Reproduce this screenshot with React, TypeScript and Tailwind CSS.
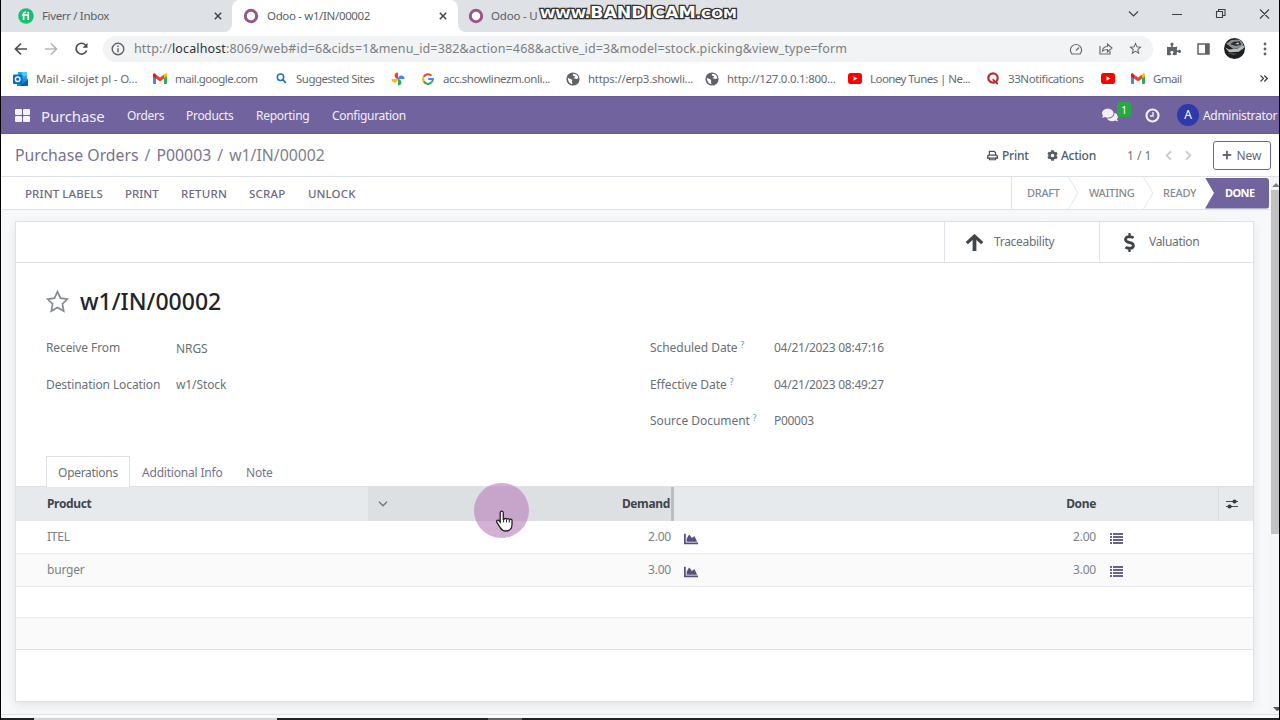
import type React from "react";
import {
  FaChartArea,
  FaChevronLeft,
  FaChevronRight,
  FaCog,
  FaComments,
  FaDollarSign,
  FaPlus,
  FaPuzzlePiece,
} from "react-icons/fa";
import { MdStarBorder } from "react-icons/md";

/* ---------- icons ---------- */

const OdooMark = () => (
  <svg width="16" height="16" viewBox="0 0 16 16" className="shrink-0">
    <circle cx="8" cy="8" r="5.7" fill="#fff" stroke="#96588a" strokeWidth="3" />
  </svg>
);

const FiverrMark = () => (
  <svg width="16" height="16" viewBox="0 0 16 16" className="shrink-0">
    <circle cx="8" cy="8" r="7.8" fill="#1dbf73" />
    <path
      d="M4 7h6.2v5M5.6 12V6.2C5.6 4.8 6.4 4.2 8 4.3"
      fill="none"
      stroke="#fff"
      strokeWidth="1.6"
    />
    <circle cx="10.2" cy="4.8" r="1" fill="#fff" />
  </svg>
);

const CloseMark = () => (
  <svg width="8" height="8" viewBox="0 0 8 8" className="shrink-0">
    <path d="M.8.8l6.4 6.4M7.2.8L.8 7.2" stroke="#3c4043" strokeWidth="1.4" />
  </svg>
);

const Outlook = () => (
  <svg width="16" height="16" viewBox="0 0 16 16" className="shrink-0">
    <path d="M5 1h9v7H5z" fill="#28a8ea" />
    <path d="M9 1h5v4H9z" fill="#50c9f5" />
    <path d="M4 7l11 1v7H4z" fill="#1490df" />
    <path d="M6 15l9-6v6z" fill="#0a5ea8" />
    <rect x="0" y="3.5" width="9.5" height="9.5" rx="1" fill="#0f6cbd" />
    <circle cx="4.7" cy="8.2" r="2.3" fill="none" stroke="#fff" strokeWidth="1.4" />
  </svg>
);

const GmailMark = () => (
  <svg width="14" height="11" viewBox="0 0 14 11" className="shrink-0">
    <path d="M0 2h3v9H1a1 1 0 0 1-1-1z" fill="#4285f4" />
    <path d="M11 2h3v8a1 1 0 0 1-1 1h-2z" fill="#34a853" />
    <path d="M11 1.6L12 .6C13 0 14 .6 14 1.8v1.4l-3 2.3z" fill="#fbbc04" />
    <path d="M3 1.4l4 3 4-3v4.1l-4 3-4-3z" fill="#ea4335" />
    <path d="M0 3.2V1.8C0 .6 1.1 0 2 .6l1 .8v4.1z" fill="#c5221f" />
  </svg>
);

const Photos = () => (
  <svg width="14" height="14" viewBox="0 0 14 14" className="shrink-0">
    <path d="M7 7V.5A3.3 3.3 0 0 0 3.6 3.7C3.6 5.600 5 7 7 7z" fill="#ea4335" />
    <path d="M7 7h6.5A3.3 3.3 0 0 0 10.3 3.6C8.400 3.600 7 5 7 7z" fill="#4285f4" />
    <path d="M7 7v6.5a3.3 3.3 0 0 0 3.4-3.2C10.400 8.400 9 7 7 7z" fill="#34a853" />
    <path d="M7 7H.5a3.3 3.3 0 0 0 3.2 3.400C5.600 10.400 7 9 7 7z" fill="#fbbc04" />
  </svg>
);

const GoogleG = () => (
  <svg width="12" height="12" viewBox="0 0 12 12" fill="none" strokeWidth="2" className="shrink-0">
    <path d="M9.5 2.6A4.9 4.9 0 0 0 1.7 3.7" stroke="#ea4335" />
    <path d="M1.7 3.7a4.9 4.9 0 0 0 0 4.6" stroke="#fbbc04" />
    <path d="M1.7 8.3a4.9 4.9 0 0 0 7.6 1.3" stroke="#34a853" />
    <path d="M9.3 9.6A4.7 4.7 0 0 0 10.9 6H6.2" stroke="#4285f4" />
  </svg>
);

const Globe = () => (
  <svg width="14" height="14" viewBox="0 0 14 14" className="shrink-0">
    <circle cx="7" cy="7" r="6.6" fill="#5f6368" />
    <path
      d="M1.800 5.5c1.500 2 3 .8 4 2.3s-.5 2 .8 4.200c-2.500 0-4.600-2-4.800-6.500zM7.600 1.800c-1.500.7-1 2.200.5 2.200s1 1.500-.2 1.800 1.800 1.500 3 1 1.400.2 1.400.2A5.200 5.200 0 0 0 7.600 1.800z"
      fill="#fff"
    />
  </svg>
);

const YouTube = () => (
  <svg width="14" height="11" viewBox="0 0 14 11" className="shrink-0">
    <rect width="14" height="11" rx="2.8" fill="#f00" />
    <path d="M5.5 3.2v4.6l3.8-2.3z" fill="#fff" />
  </svg>
);

const Quora = () => (
  <svg width="12" height="13" viewBox="0 0 12 13" fill="none" stroke="#b92b27" className="shrink-0">
    <circle cx="6" cy="6" r="4.7" strokeWidth="2.2" />
    <path d="M5.5 7.5c1.8 0 2.3 4.2 5.5 4" strokeWidth="1.8" />
  </svg>
);

const SearchMark = () => (
  <svg width="11" height="11" viewBox="0 0 11 11" fill="none" stroke="#1a73b8" className="shrink-0">
    <circle cx="4.5" cy="4.3" r="3.2" strokeWidth="1.5" />
    <path d="M7 6.8l2.800 3" strokeWidth="1.8" />
  </svg>
);

const PrinterIcon = () => (
  <svg width="11" height="11" viewBox="0 0 12 11" fill="none" stroke="#495057" className="shrink-0">
    <path d="M2.6 5V1h5.2l1.600 1.500V5" strokeWidth="1.300" />
    <path d="M.8 8.5V6.3A1.200 1.200 0 0 1 2 5.100h8a1.200 1.200 0 0 1 1.200 1.200v2.200" strokeWidth="1.500" />
    <path d="M0 8.400h12M2.600 7.500v2.700h6.800V7.500" strokeWidth="1.200" />
  </svg>
);

const ClockIcon = () => (
  <svg width="15" height="15" viewBox="0 0 15 15" fill="none" stroke="currentColor" className="shrink-0">
    <circle cx="7.500" cy="7.500" r="6" strokeWidth="2.200" />
    <path d="M8 4v4H5" strokeWidth="1.400" />
  </svg>
);

const ArrowUpIcon = () => (
  <svg width="19" height="17" viewBox="0 0 19 17" fill="none" stroke="#40454a" className="shrink-0">
    <path d="M1.800 9.200L9.500 2l7.700 7.200" strokeWidth="3.200" />
    <path d="M9.500 3v14" strokeWidth="3.800" />
  </svg>
);

const StarOutline = () => (
  <svg width="23" height="23" viewBox="0 0 23 23" className="shrink-0">
    <path
      d="M11.500 1.700l3 6.500 7 .9-5.100 4.800 1.300 7.100-6.200-3.500L5.300 21l1.300-7.100L1.500 9.100l7-.9z"
      fill="none"
      stroke="#868b90"
      strokeWidth="1.700"
    />
  </svg>
);

const ListIcon = () => (
  <svg width="13" height="11" viewBox="0 0 13 11" fill="#68638a" className="shrink-0">
    <path d="M0 0h2v2H0zM0 3h2v2H0zM0 6h2v2H0zM0 9h2v2H0zM3 0h10v2H3zM3 3h10v2H3zM3 6h10v2H3zM3 9h10v2H3z" />
  </svg>
);

const SlidersIcon = () => (
  <svg width="12" height="10" viewBox="0 0 12 10" className="shrink-0">
    <path d="M0 2.5h12M0 7.5h12" stroke="#495057" strokeWidth="1.2" />
    <circle cx="8.5" cy="2.5" r="2.1" fill="#343a40" />
    <circle cx="3.6" cy="7.5" r="2.1" fill="#343a40" />
  </svg>
);

const StepArrow = () => (
  <svg width="11" height="32" viewBox="0 0 11 32" fill="none" className="shrink-0">
    <path d="M.5 0L10 16 .5 32" stroke="#e3e6e9" />
  </svg>
);

const HandCursor = () => (
  <svg width="18" height="22" viewBox="0 0 18 22">
    <path
      d="M5.700 1.200c-.9 0-1.500.6-1.500 1.500v9.500l-1-1.300c-.6-.8-1.500-.9-2.100-.4-.6.500-.6 1.200-.2 1.900l3.300 5.200c1.300 2.200 2.600 3.400 5.400 3.400 4 0 6.400-2.300 6.400-6.500v-4c0-1.800-2.300-1.800-2.500-.4-.1-1.900-2.500-2-2.800-.5-.2-1.700-2.600-1.700-2.800-.3h-.6V2.700c0-.9-.7-1.500-1.600-1.500z"
      fill="#fff"
      stroke="#222"
      strokeWidth="1.300"
    />
    <path d="M7.600 8.500v3.800M10.500 9.500v2.800M13.300 10v2.500" stroke="#222" />
  </svg>
);

/* ---------- browser chrome ---------- */

const TabStrip = () => (
  <div className="flex h-8 bg-white text-[11.5px] text-[#5b5f64]">
    <div className="flex w-[231px] items-center rounded-br-lg bg-[#dee1e6] pl-[17px] pr-[10px]">
      <FiverrMark />
      <span className="ml-2 flex-1 tracking-[-0.35px]">Fiverr / Inbox</span>
      <CloseMark />
    </div>
    <div className="w-[226px] bg-[#dee1e6]">
      <div className="flex h-full items-center rounded-t-lg bg-white pl-[11px] pr-[11px]">
        <OdooMark />
        <span className="ml-2 flex-1 tracking-[-0.35px]">Odoo - w1/IN/00002</span>
        <CloseMark />
      </div>
    </div>
    <div className="relative flex flex-1 items-center rounded-bl-lg bg-[#dee1e6] pl-[10px] pr-[9px]">
      <OdooMark />
      <span className="ml-[7px] flex-1 tracking-[-0.2px]">Odoo - U</span>
      <svg width="142" height="12" viewBox="0 0 142 12" fill="none" stroke="#3c4043" strokeWidth="1.1" className="-mt-[5px]">
        <path d="M1 3.500l4.500 4.500L10 3.500M44 6.500h10M88.500 3.500h6v6h-6zM90.500 3.500V1.500h6.500v6h-2.500M132 1.500l9 9M141 1.500l-9 9" />
      </svg>
      {/* recorder watermark */}
      <div className="absolute left-[82px] top-[4px] flex h-[18px] origin-left scale-x-[1.158] items-baseline whitespace-nowrap font-['DejaVu_Sans'] font-bold leading-[18px] text-white [-webkit-text-stroke:2.5px_#333] [paint-order:stroke_fill]">
        <span className="text-[12px]">WWW.</span>
        <span className="text-[15px]">BANDICAM</span>
        <span className="text-[12px]">.COM</span>
      </div>
    </div>
  </div>
);

const AddressBar = () => (
  <div className="flex h-[33px] items-center bg-white pl-[13px] pr-[12px] text-[#5f6368]">
    <svg width="77" height="14" viewBox="0 0 77 14" fill="none" strokeWidth="1.7" className="shrink-0">
      <path d="M13 7H1.500M7 1.500L1.500 7 7 12.500" stroke="#4a4d51" />
      <path d="M31 7h11.500M37 1.500L42.500 7 37 12.500" stroke="#b5b8bb" />
      <path d="M71.500 3A5.400 5.400 0 1 0 72.600 8.500" stroke="#4a4d51" />
      <path d="M73.500.8v5h-5z" fill="#4a4d51" />
    </svg>
    <div className="ml-[12px] flex h-[26px] w-[1050px] shrink-0 items-center rounded-full bg-[#f1f3f4] pl-[8px] pr-[8px]">
      <svg width="14" height="14" viewBox="0 0 14 14" fill="none" stroke="#5f6368" strokeWidth="1.4" className="shrink-0">
        <circle cx="7" cy="7" r="5.8" />
        <path d="M7 6.200v4M7 3.500V5" />
      </svg>
      <span className="ml-[9px] flex-1 whitespace-nowrap pt-[2px] text-[12.5px] tracking-[0.13px] text-[#7b7f83]">
        http://<span className="text-[#303336]">localhost</span>
        :8069/web#id=6&amp;cids=1&amp;menu_id=382&amp;action=468&amp;active_id=3&amp;model=stock.picking&amp;view_type=form
      </span>
      <svg width="45" height="14" viewBox="0 0 45 14" fill="none" stroke="#6a6e73" strokeWidth="1.2">
        <path d="M3 12a5.600 5.600 0 1 1 8 0zM7 8.500L10 5.500M31 4v8h10V9" />
        <path d="M33.500 9c.3-3 2-4.500 5-4.500V2l4.500 4-4.500 4V7.500c-2 0-3.500.3-5 1.500z" />
      </svg>
      <MdStarBorder className="ml-[14px] mr-[2px] size-[15px]" />
    </div>
    <FaPuzzlePiece className="ml-[14px] size-[14px] shrink-0" />
    <svg width="13" height="12" viewBox="0 0 13 12" className="ml-[16px] shrink-0">
      <path d="M1 1h11v10H1z" fill="none" stroke="#5f6368" strokeWidth="1.5" />
      <path d="M8 1h4v10H8z" fill="#5f6368" />
    </svg>
    <svg width="21" height="21" viewBox="0 0 20 20" className="ml-[14px] shrink-0">
      <circle cx="10" cy="10" r="10" fill="#1d1f20" />
      <path d="M2 5.500l5-3.500 8-.5 3.500 4-1 3-8.500 2z" fill="#8b9192" />
      <path d="M6 6l3-2.500 6-.5 1.500 3.500-5 1z" fill="#2b2d2e" />
      <path d="M10.500 6l3-2 1 2z" fill="#c7cccd" />
      <path d="M1 9l4 2 8-1 6-3v2.500l-5 3.500-9 .5z" fill="#b9bebf" />
      <path d="M3 14l10 1-4 1.500z" fill="#4d5051" />
    </svg>
    <svg width="4" height="14" viewBox="0 0 4 14" className="ml-auto shrink-0" fill="#5f6368">
      <circle cx="2" cy="2" r="1.4" />
      <circle cx="2" cy="7" r="1.4" />
      <circle cx="2" cy="12" r="1.4" />
    </svg>
  </div>
);

interface BookmarkProps {
  icon: React.ReactNode;
  label?: string;
  className: string;
}

const Bookmark = ({ icon, label, className }: BookmarkProps) => (
  <div className={`flex shrink-0 items-center ${className}`}>
    {icon}
    {label && <span className="whitespace-nowrap">{label}</span>}
  </div>
);

const BookmarksBar = () => (
  <div className="flex h-[31px] items-center bg-white pb-[4px] pl-[12px] text-[11.5px] tracking-[-0.28px] text-[#676b70]">
    <Bookmark icon={<Outlook />} label="Mail - silojet pl - O..." className="w-[140px] gap-[7px] tracking-[-0.15px]" />
    <Bookmark icon={<GmailMark />} label="mail.google.com" className="w-[123px] gap-[8px] tracking-[-0.5px]" />
    <Bookmark icon={<SearchMark />} label="Suggested Sites" className="w-[115px] gap-[9px] tracking-[-0.5px]" />
    <Bookmark icon={<Photos />} className="w-[31px]" />
    <Bookmark icon={<GoogleG />} label="acc.showlinezm.onli..." className="w-[144px] gap-[9px] tracking-[-0.45px]" />
    <Bookmark icon={<Globe />} label="https://erp3.showli..." className="w-[139px] gap-[8px]" />
    <Bookmark icon={<Globe />} label="http://127.0.0.1:800..." className="w-[143px] gap-[8px]" />
    <Bookmark icon={<YouTube />} label="Looney Tunes | Ne..." className="w-[139px] gap-[8px] tracking-[-0.55px]" />
    <Bookmark icon={<Quora />} label="33Notifications" className="w-[114px] gap-[9px] tracking-[-0.4px]" />
    <Bookmark icon={<YouTube />} className="w-[30px]" />
    <Bookmark icon={<GmailMark />} label="Gmail" className="w-[129px] gap-[8px] tracking-[-0.6px]" />
    <svg width="8" height="7" viewBox="0 0 8 7" fill="none" stroke="#3c4043" strokeWidth="1.2">
      <path d="M.5.5l3 3-3 3M4.300.5l3 3-3 3" />
    </svg>
  </div>
);

/* ---------- odoo ---------- */

const NavBar = () => (
  <div className="flex h-[38px] items-center border-y border-[#665a8f] bg-[#71639e] pl-[14px] text-[12px] tracking-[-0.3px] text-[#f1eff7]">
    <svg width="15" height="13" viewBox="0 0 15 13" fill="#f5f3fa" className="shrink-0">
      <rect width="7" height="6" rx="1" />
      <rect x="8" width="7" height="6" rx="1" />
      <rect y="7" width="7" height="6" rx="1" />
      <rect x="8" y="7" width="7" height="6" rx="1" />
    </svg>
    <span className="ml-[11px] w-[86px] pt-[2px] text-[15px] tracking-[-0.15px]">Purchase</span>
    <span className="w-[59px] pt-[2px]">Orders</span>
    <span className="w-[70px] pt-[2px]">Products</span>
    <span className="w-[76px] pt-[2px]">Reporting</span>
    <span className="pt-[2px]">Configuration</span>
    <div className="relative ml-auto w-[43px]">
      <FaComments className="size-[16px]" />
      <span className="absolute -top-[5px] left-[15px] flex h-[15px] w-[14px] items-center justify-center rounded-[3px] bg-[#28a745] text-[10px] leading-none text-white">
        1
      </span>
    </div>
    <ClockIcon />
    <span className="ml-[17px] flex size-[22px] items-center justify-center rounded-full bg-[#3039ab] text-[12px] text-white">
      A
    </span>
    <span className="ml-[4px] w-[76px] whitespace-nowrap pt-[2px]">Administrator</span>
  </div>
);

const ControlPanel = () => (
  <div className="flex h-[43px] items-center border-b border-[#dee2e6] bg-white pl-[14px] pr-[8px] text-[12px] text-[#555b61]">
    <div className="flex flex-1 gap-[6px] pt-[2px] text-[15.8px] text-[#7b8288]">
      <span className="text-[#79728f]">Purchase Orders</span>
      <span>/</span>
      <span className="text-[#79728f]">P00003</span>
      <span>/</span>
      <span>w1/IN/00002</span>
    </div>
    <PrinterIcon />
    <span className="ml-[4px] w-[45px] pt-px font-medium tracking-[-0.25px]">Print</span>
    <FaCog className="size-[11px]" />
    <span className="ml-[3px] w-[66px] pt-px font-medium tracking-[-0.25px]">Action</span>
    <span className="w-[36px] pt-px text-[#6c757d]">1 / 1</span>
    <FaChevronLeft className="size-[11px] text-[#c3c7cb]" />
    <FaChevronRight className="ml-[9px] size-[11px] text-[#c3c7cb]" />
    <button className="ml-[19px] flex h-[29px] w-[58px] items-center justify-center gap-[4px] rounded-[3px] border border-[#71639e] text-[#696579]">
      <FaPlus className="size-[10px]" />
      <span className="pt-px">New</span>
    </button>
  </div>
);

const StatusBar = () => (
  <div className="flex h-[33px] items-center border-b border-[#dee2e6] bg-white pl-[24px] text-[11.5px] font-medium text-[#6f6a82]">
    <span className="w-[100px] pt-px tracking-[0.1px]">PRINT LABELS</span>
    <span className="w-[56px] pt-px">PRINT</span>
    <span className="w-[68px] pt-px tracking-[0.2px]">RETURN</span>
    <span className="w-[59px] pt-px tracking-[0.2px]">SCRAP</span>
    <span className="pt-px tracking-[0.1px]">UNLOCK</span>
    <div className="ml-auto flex h-full items-center border-l border-[#dee2e6] pl-[15px] text-[11px] text-[#858b90]">
      <span className="w-[41px] tracking-[-0.3px]">DRAFT</span>
      <StepArrow />
      <span className="ml-[10px] w-[54px] tracking-[-0.3px]">WAITING</span>
      <StepArrow />
      <span className="ml-[9px] w-[42px] tracking-[-0.3px]">READY</span>
      <span className="mr-px flex h-[31px] w-[64px] items-center rounded-r-[3px] bg-[#71639e] pl-[20px] font-bold tracking-[-0.6px] text-white [clip-path:polygon(0_0,100%_0,100%_100%,0_100%,9px_50%)]">
        DONE
      </span>
    </div>
  </div>
);

interface FieldProps {
  label: string;
  value: string;
  help?: boolean;
  className?: string;
}

const Field = ({ label, value, help, className = "" }: FieldProps) => (
  <div className="flex h-[36.5px] items-center">
    <span className={help ? "w-[124px]" : "w-[130px]"}>
      {label}
      {help && <sup className="ml-[3px] text-[8.5px] text-[#4a9bb5]">?</sup>}
    </span>
    <span className={className}>{value}</span>
  </div>
);

const rows = [
  { product: "ITEL", demand: "2.00", done: "2.00" },
  { product: "burger", demand: "3.00", done: "3.00" },
];

const OperationsTable = () => (
  <div className="relative text-[12px] text-[#7b8187]">
    <div className="flex h-[35px] items-center border-t border-[#dee2e6] bg-[#e6eaed] font-bold tracking-[-0.35px] text-[#40464c]">
      <span className="w-[352px] pl-[31px]">Product</span>
      <div className="flex h-full w-[306px] items-center justify-between border-r-[3px] border-[#b9bec2] bg-[#dce0e3] pl-[10px] pr-px">
        <svg width="10" height="6" viewBox="0 0 10 6" fill="none" stroke="#6c757d" strokeWidth="1.3">
          <path d="M1 .8l4 4 4-4" />
        </svg>
        <span>Demand</span>
      </div>
      <span className="w-[422px] text-right">Done</span>
      <div className="ml-auto flex h-full w-[35px] items-center border-l border-[#d8dcdf] pl-[7px]">
        <SlidersIcon />
      </div>
    </div>
    {rows.map((row) => (
      <div
        key={row.product}
        className="flex h-[33px] items-center border-b border-[#e9ecef] pl-[31px] tracking-[-0.2px] even:bg-white odd:bg-[#fafafa]"
      >
        <span className="w-[624px] shrink-0">
          <span className="flex justify-between">
            <span>{row.product}</span>
            <span>{row.demand}</span>
          </span>
        </span>
        <FaChartArea className="ml-[13px] mt-[3px] size-[14px] text-[#56507e]" />
        <span className="w-[398px] text-right">{row.done}</span>
        <span className="ml-[14px] mt-[2px]">
          <ListIcon />
        </span>
      </div>
    ))}
    <div className="h-[31px] border-b border-[#e9ecef]" />
    <div className="h-[32px] border-b border-[#dee2e6] bg-[#fafafa]" />
    {/* click highlight with the pointer */}
    <div className="absolute -top-[3px] left-[458px] size-[55px] rounded-full bg-[#bb86bd]/65">
      <div className="absolute left-[22px] top-[27px]">
        <HandCursor />
      </div>
    </div>
  </div>
);

const FormSheet = () => (
  <div className="flex h-[481px] flex-col border border-[#dee2e6] bg-white text-[12px] text-[#6a7076] shadow-[0_4px_10px_rgba(0,0,0,0.08)]">
    <div className="flex h-[41px] shrink-0 justify-end border-b border-[#dee2e6]">
      <div className="flex w-[155px] items-center border-l border-[#dee2e6] pl-[20px]">
        <ArrowUpIcon />
        <span className="ml-[10px] tracking-[-0.3px]">Traceability</span>
      </div>
      <div className="flex w-[154px] items-center border-l border-[#dee2e6] pl-[20px]">
        <FaDollarSign className="size-[19px] text-[#40454a]" />
        <span className="ml-[10px] tracking-[-0.3px]">Valuation</span>
      </div>
    </div>
    <div className="mt-[22px] flex h-[32px] shrink-0 items-center pl-[30px]">
      <StarOutline />
      <h1 className="ml-[11px] text-[23px] font-medium leading-8 text-[#212529]">w1/IN/00002</h1>
    </div>
    <div className="mt-[13px] flex h-[110px] shrink-0 pl-[30px]">
      <div className="w-[604px] tracking-[-0.1px]">
        <Field label="Receive From" value="NRGS" className="pt-px" />
        <Field label="Destination Location" value="w1/Stock" className="pt-px" />
      </div>
      <div className="tracking-[-0.05px]">
        <Field label="Scheduled Date" value="04/21/2023 08:47:16" className="tracking-[-0.25px]" help />
        <Field label="Effective Date" value="04/21/2023 08:49:27" className="tracking-[-0.25px]" help />
        <Field label="Source Document" value="P00003" className="tracking-[-0.3px]" help />
      </div>
    </div>
    <div className="mt-[16px] flex h-[30px] shrink-0 items-center pl-[30px] text-[#777189]">
      <span className="relative z-10 -mb-px flex h-[31px] w-[84px] items-center justify-center border border-b-0 border-[#dee2e6] bg-white pt-[2px] tracking-[-0.3px] text-[#6a7076]">
        Operations
      </span>
      <span className="ml-[12px] w-[104px] pt-[3px] tracking-[-0.2px]">Additional Info</span>
      <span className="pt-[3px] tracking-[-0.2px]">Note</span>
    </div>
    <OperationsTable />
  </div>
);

const Scrollbar = () => (
  <div className="flex w-[9px] flex-col items-end bg-[#f4f5f6]">
    <div className="flex h-[13px] items-end justify-center pb-[3px]">
      <svg width="7" height="4" viewBox="0 0 7 4" fill="#7d8286">
        <path d="M0 4l4-4 3 3v1z" />
      </svg>
    </div>
    <div className="h-[344px] w-[8px] bg-[#c1c1c1]" />
    <svg width="6" height="4" viewBox="0 0 6 4" fill="#50555a" className="mb-[3px] mt-auto">
      <path d="M0 0h6v3L4 4z" />
    </svg>
  </div>
);

const App: React.FC = () => {
  return (
    <div className="flex h-[720px] w-[1280px] flex-col overflow-hidden border-x border-black bg-white font-['Noto_Sans','Open_Sans',sans-serif]">
      <TabStrip />
      <AddressBar />
      <BookmarksBar />
      <NavBar />
      <ControlPanel />
      <div className="flex h-[537px]">
        <div className="flex w-[1269px] flex-col bg-[#f6f8fa]">
          <StatusBar />
          <main className="flex-1 overflow-hidden pl-[14px] pr-[16px] pt-[11px]">
            <FormSheet />
          </main>
        </div>
        <Scrollbar />
      </div>
      <div className="h-1 border-t border-[#e1e4e6] bg-[#fafbfb]" />
      <div className="flex h-0.5 bg-[#202223]">
        <div className="ml-[33px] w-[243px] bg-[#d4d6d7]" />
        <div className="ml-[211px] w-[34px] bg-[#606263]" />
      </div>
    </div>
  );
};

export default App;
